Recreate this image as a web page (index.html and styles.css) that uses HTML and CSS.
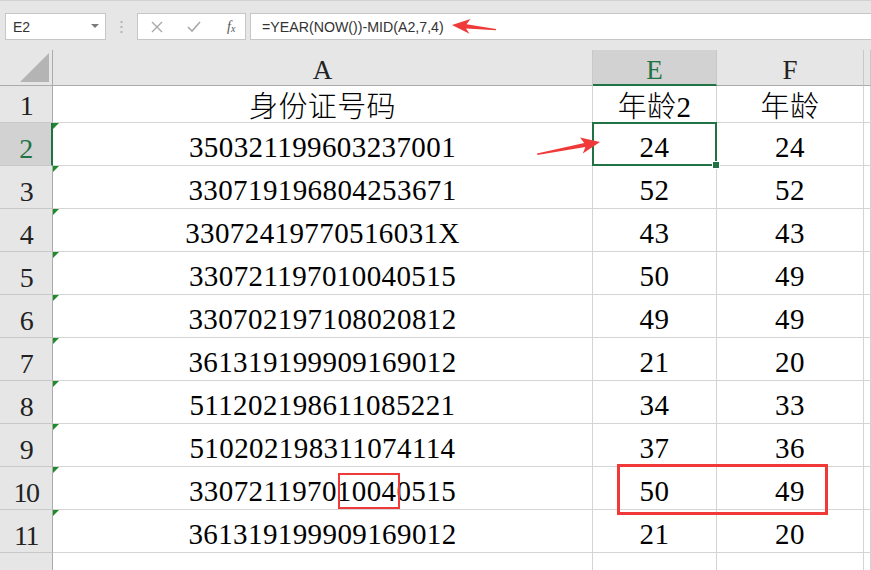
FILE: index.html
```html
<!DOCTYPE html>
<html lang="zh">
<head>
  <meta charset="UTF-8" />
  <title>年龄</title>
  <link rel="stylesheet" href="styles.css">
</head>
<body>

<div class="toolbar">
  <div class="namebox">
    <span>E2</span>
    <span class="caret"></span>
  </div>
  <div class="grip">
    <svg width="3" height="12" viewBox="0 0 3 12"><rect x="0.5" y="0" width="2" height="2" fill="#b3b3b3"/><rect x="0.5" y="5" width="2" height="2" fill="#b3b3b3"/><rect x="0.5" y="10" width="2" height="2" fill="#b3b3b3"/></svg>
  </div>
  <div class="fbtns">
    <svg width="12" height="12" viewBox="0 0 12 12"><path d="M1 1 L11 11 M11 1 L1 11" stroke="#a8a8a8" stroke-width="1.4"/></svg>
    <svg width="14" height="12" viewBox="0 0 14 12"><path d="M1 6 L5 10 L13 1" stroke="#a8a8a8" stroke-width="1.6" fill="none"/></svg>
    <span class="fx">f<sub>x</sub></span>
  </div>
  <div class="formula">=YEAR(NOW())-MID(A2,7,4)</div>
</div>

<div class="sheet">
  <div class="hd corner"><span class="tri"></span></div>
  <div class="hd col">A</div>
  <div class="hd col cur">E</div>
  <div class="hd col">F</div>
  <div class="hd col"></div>

  <div class="rh">1</div>
  <div class="c cn">身份证号码</div>
  <div class="c cn">年龄2</div>
  <div class="c cn">年龄</div>
  <div class="c"></div>

  <div class="rh cur">2</div>
  <div class="c id">350321199603237001</div>
  <div class="c sel">24</div>
  <div class="c">24</div>
  <div class="c"></div>

  <div class="rh">3</div>
  <div class="c id">330719196804253671</div>
  <div class="c">52</div>
  <div class="c">52</div>
  <div class="c"></div>

  <div class="rh">4</div>
  <div class="c id">33072419770516031X</div>
  <div class="c">43</div>
  <div class="c">43</div>
  <div class="c"></div>

  <div class="rh">5</div>
  <div class="c id">330721197010040515</div>
  <div class="c">50</div>
  <div class="c">49</div>
  <div class="c"></div>

  <div class="rh">6</div>
  <div class="c id">330702197108020812</div>
  <div class="c">49</div>
  <div class="c">49</div>
  <div class="c"></div>

  <div class="rh">7</div>
  <div class="c id">361319199909169012</div>
  <div class="c">21</div>
  <div class="c">20</div>
  <div class="c"></div>

  <div class="rh">8</div>
  <div class="c id">511202198611085221</div>
  <div class="c">34</div>
  <div class="c">33</div>
  <div class="c"></div>

  <div class="rh">9</div>
  <div class="c id">510202198311074114</div>
  <div class="c">37</div>
  <div class="c">36</div>
  <div class="c"></div>

  <div class="rh">10</div>
  <div class="c id">330721197010040515</div>
  <div class="c">50</div>
  <div class="c">49</div>
  <div class="c"></div>

  <div class="rh">11</div>
  <div class="c id">361319199909169012</div>
  <div class="c">21</div>
  <div class="c">20</div>
  <div class="c"></div>

  <div class="rh">12</div>
  <div class="c"></div>
  <div class="c"></div>
  <div class="c"></div>
  <div class="c"></div>
</div>

<!-- annotations drawn over the sheet -->
<div class="mark mark-digits"></div>
<div class="mark mark-ages"></div>
<svg class="arrows" width="871" height="570" viewBox="0 0 871 570">
  <polygon points="452,25 470.5,19 466.5,24.2 496,29 496,30.2 466,28.4 469.5,33.8" fill="#f03a3a"/>
  <polygon points="600,142 580,137.5 584.2,143 537,153.6 537.4,155 585.4,147 582.8,153.4" fill="#f03a3a"/>
</svg>

</body>
</html>
```

FILE: styles.css
```css
* {
  box-sizing: border-box;
}

html, body {
  margin: 0;
  padding: 0;
  background: #e6e6e6;
  overflow: hidden;
}

body {
  width: 871px;
  height: 570px;
  position: relative;
}

.toolbar {
  height: 50px;
  display: flex;
  align-items: flex-start;
  padding: 12px 0 0 5px;
  border-top: 1px solid #d2d2d2;
  font-family: "Liberation Sans", Arial, sans-serif;
  font-size: 14px;
  color: #333;
}

.namebox {
  width: 101px;
  height: 27px;
  background: white;
  border: 1px solid #c6c6c6;
  display: flex;
  align-items: center;
  justify-content: space-between;
  padding: 0 6px 0 7px;
}

.caret {
  width: 0;
  height: 0;
  border-left: 4px solid transparent;
  border-right: 4px solid transparent;
  border-top: 4px solid #7a7a7a;
  margin-top: -2px;
}

.grip {
  width: 31px;
  height: 27px;
  display: flex;
  align-items: center;
  justify-content: center;
}

.fbtns {
  width: 109px;
  height: 27px;
  background: white;
  border: 1px solid #c6c6c6;
  display: flex;
  align-items: center;
  padding: 0 0 0 13px;
  gap: 24px;
}

.fx {
  font-family: "Liberation Serif", serif;
  font-style: italic;
  font-size: 14px;
  color: #555;
  margin-left: 2px;
}

.fx sub {
  font-size: 10px;
  vertical-align: -1px;
}

.formula {
  flex: 1;
  height: 27px;
  margin-left: 4px;
  background: white;
  border: 1px solid #c6c6c6;
  border-right: none;
  display: flex;
  align-items: center;
  padding-left: 11px;
  font-size: 14.2px;
}

.sheet {
  display: grid;
  grid-template-columns: 53px 540px 124px 147px 1fr;
  grid-template-rows: 36px 37px repeat(11, 43px);
  font-family: "Liberation Serif", "Noto Sans CJK SC", serif;
  color: #000;
}

.hd {
  background: #e6e6e6;
  border-right: 1px solid #c8c8c8;
  border-bottom: 1px solid #ababab;
  display: flex;
  justify-content: center;
  align-items: flex-end;
  font-size: 27px;
  line-height: 1;
  padding-bottom: 1px;
  color: #222;
}

.hd.corner {
  border-right-color: #ababab;
  position: relative;
}

.tri {
  position: absolute;
  right: 3px;
  bottom: 3px;
  width: 0;
  height: 0;
  border-left: 29px solid transparent;
  border-bottom: 29px solid #b4b4b4;
}

.hd.cur {
  background: #d2d2d2;
  color: #217346;
  border-bottom: 2px solid #217346;
  padding-bottom: 0;
}

.rh {
  background: #e6e6e6;
  border-right: 1px solid #ababab;
  border-bottom: 1px solid #c8c8c8;
  display: flex;
  justify-content: center;
  align-items: flex-end;
  font-size: 28px;
  letter-spacing: -1.5px;
  line-height: 1;
  padding-bottom: 2px;
  color: #222;
}

.rh.cur {
  background: #d2d2d2;
  color: #217346;
  border-right: 2px solid #217346;
}

.c {
  background: white;
  border-right: 1px solid #d4d4d4;
  border-bottom: 1px solid #d4d4d4;
  display: flex;
  justify-content: center;
  align-items: flex-end;
  font-size: 29px;
  letter-spacing: 0.4px;
  line-height: 1;
  padding-bottom: 3px;
  position: relative;
}

.c.cn {
  font-weight: 300;
  padding-bottom: 0;
}

.c.id::before {
  content: "";
  position: absolute;
  left: 0;
  top: 0;
  border-top: 6px solid #1e8a2a;
  border-right: 6px solid transparent;
}

.c.sel::after {
  content: "";
  position: absolute;
  left: -1px;
  top: -1px;
  right: -1px;
  bottom: -1px;
  border: 2px solid #217346;
}

.c.sel::before {
  content: "";
  position: absolute;
  right: -4px;
  bottom: -4px;
  width: 6px;
  height: 6px;
  background: #217346;
  border: 1px solid white;
  z-index: 2;
}

.mark {
  position: absolute;
  border: 2px solid #f03a3a;
}

.mark-digits {
  left: 338px;
  top: 473px;
  width: 62px;
  height: 36px;
}

.mark-ages {
  left: 617px;
  top: 464px;
  width: 211px;
  height: 51px;
  border-width: 3px;
}

.arrows {
  position: absolute;
  left: 0;
  top: 0;
  pointer-events: none;
}
```
